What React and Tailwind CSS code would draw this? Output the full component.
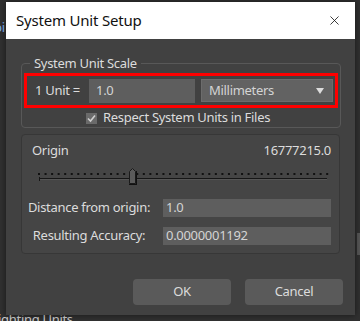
import { X } from "lucide-react";

const Slider = () => {
  const dots = [];
  for (let i = 0; i < 45; i++) dots.push(8 + i * 6.55);
  return (
    <svg width="300" height="18" viewBox="0 0 300 18" className="block">
      {dots.map((x, i) => (
        <rect key={i} x={x} y="5" width="2" height="2" fill="#111" />
      ))}
      <line x1="9" y1="10.5" x2="297" y2="10.5" stroke="#161616" />
      <line x1="9" y1="11.5" x2="297" y2="11.5" stroke="#555" />
      <line x1="9.5" y1="9" x2="9.5" y2="13" stroke="#161616" />
      <path d="M99.5 15.5 V3.5 L102.5 0.5 L105.5 3.5 V15.5 Z" fill="#5b5b5b" stroke="#1a1a1a" />
      <line x1="106.5" y1="3" x2="106.5" y2="16.5" stroke="#111" />
      <line x1="99" y1="16.5" x2="107" y2="16.5" stroke="#111" />
    </svg>
  );
};

export default function App() {
  return (
    <div className="w-[360px] h-[321px] bg-[#303030] relative overflow-hidden font-['Noto_Sans',sans-serif] text-[#dcdcdc] tracking-[-0.3px]">
      <div className="absolute left-0 top-[18px] text-[13px] text-[#7fb4f0] -ml-[6px]">pi</div>
      <div className="absolute left-0 top-[310px] text-[13px] text-[#cfcfcf] -ml-[2px]">ighting Units</div>
      <div className="absolute right-0 top-[233px] w-[3px] h-[22px] bg-[#555]" />

      <div className="pt-[2px] pl-[6px] relative">
        <div className="w-[349px] h-[313px] flex flex-col bg-[#414141] shadow-[0_0_6px_rgba(0,0,0,0.5)]">
          <div className="h-[37px] bg-white flex items-center justify-between pl-[10px] pr-[13px]">
            <span className="text-[15px] text-[#111] tracking-[-0.2px]">System Unit Setup</span>
            <X size={15} strokeWidth={1.3} color="#111" />
          </div>

          <div className="flex-1 flex flex-col px-[15px] pt-[15px]">
            <fieldset className="border border-[#585858] rounded-[4px] px-[2px] pb-0">
              <legend className="ml-[6px] px-[4px] text-[13px] leading-[18px]">System Unit Scale</legend>
              <div className="border-[3px] border-[#ff0000] h-[35px] w-[314px] flex items-center pl-[8px] mt-[1px]">
                <span className="text-[13px] w-[54px]">1 Unit =</span>
                <div className="w-[106px] h-[24px] bg-[#5e5e5e] flex items-center pl-[7px] text-[13px] text-[#d4d4d4]">1.0</div>
                <div className="ml-[6px] w-[132px] h-[23px] bg-[#626262] border border-[#6c6c6c] flex items-center justify-between pl-[7px] pr-[8px] text-[13px] text-[#d4d4d4]">
                  <span>Millimeters</span>
                  <svg width="8" height="6" viewBox="0 0 8 6">
                    <path d="M0 0 H8 L4 6 Z" fill="#dcdcdc" />
                  </svg>
                </div>
              </div>
              <div className="flex items-center h-[18px] mt-[1px] pl-[62px]">
                <div className="w-[11px] h-[11px] bg-[#6a6a6a] flex items-center justify-center">
                  <svg width="9" height="9" viewBox="0 0 9 9">
                    <path d="M1 4.5 L3.5 7 L8 1.5" stroke="#cfcfcf" strokeWidth="1.6" fill="none" />
                  </svg>
                </div>
                <span className="ml-[6px] text-[13px]">Respect System Units in Files</span>
              </div>
            </fieldset>

            <div className="mt-[6px] h-[120px] bg-[#454545] border border-[#373737] rounded-[4px] flex flex-col">
              <div className="flex justify-between items-center pl-[10px] pr-[8px] mt-[7px] h-[18px] text-[13px]">
                <span>Origin</span>
                <span>16777215.0</span>
              </div>
              <div className="mt-[8px] pl-[8px]">
                <Slider />
              </div>
              <div className="flex items-center mt-[13px] h-[18px]">
                <span className="w-[134px] text-center text-[13px]">Distance from origin:</span>
                <div className="ml-[7px] w-[168px] h-[18px] bg-[#5e5e5e] flex items-center pl-[3px] text-[13px] text-[#d4d4d4]">1.0</div>
              </div>
              <div className="flex items-center mt-[10px] h-[18px]">
                <span className="w-[134px] text-center text-[13px]">Resulting Accuracy:</span>
                <div className="ml-[7px] w-[168px] h-[18px] bg-[#5e5e5e] flex items-center pl-[3px] text-[13px] text-[#d4d4d4]">0.0000001192</div>
              </div>
            </div>

            <div className="flex justify-end gap-[14px] mt-[25px] -mr-[3px]">
              <button className="w-[98px] h-[26px] rounded-[4px] bg-[#5a5a5a] text-[13px] text-[#dcdcdc]">OK</button>
              <button className="w-[98px] h-[26px] rounded-[4px] bg-[#5a5a5a] text-[13px] text-[#dcdcdc]">Cancel</button>
            </div>
          </div>
        </div>
      </div>
    </div>
  );
}
